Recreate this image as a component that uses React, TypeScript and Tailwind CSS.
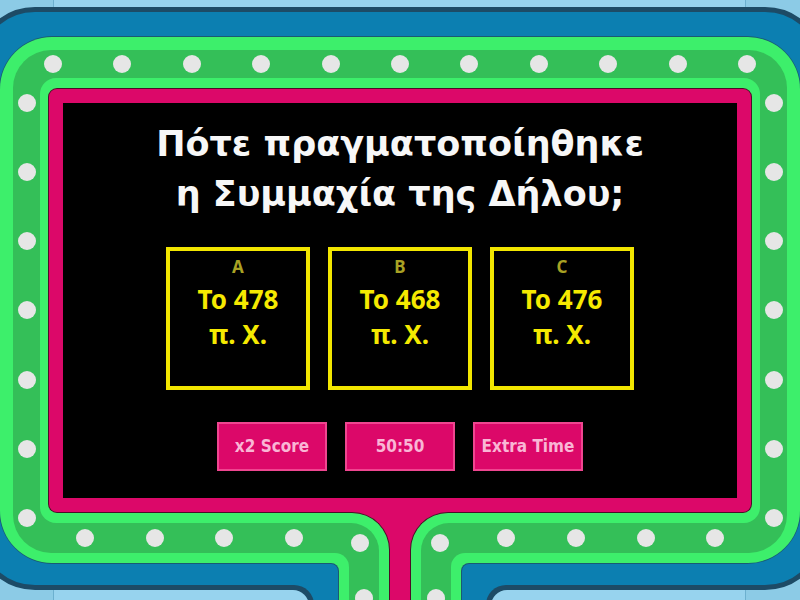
const BLUE = "bg-[#0c7fb1]";

function Dot({ className = "" }: { className?: string }) {
  return <div className={`h-[18px] w-[18px] shrink-0 rounded-full bg-[#e6e6e6] ${className}`} />;
}

function Dots({ n }: { n: number }) {
  return (
    <>
      {Array.from({ length: n }).map((_, i) => (
        <Dot key={i} />
      ))}
    </>
  );
}

const answers = [
  { letter: "A", text: "To 478" },
  { letter: "B", text: "To 468" },
  { letter: "C", text: "To 476" },
];

const powerUps = ["x2 Score", "50:50", "Extra Time"];

function Screen() {
  return (
    <div className="h-full rounded-[16px] bg-[#3def6b] px-[8px] py-[10px]">
      <div className="h-full rounded-[9px] bg-[#4a0e26] p-px">
        <div className="flex h-full flex-col items-center rounded-[8px] border-[14px] border-[#dc0869] bg-black pt-[16px]">
          <h1 className="whitespace-nowrap text-center font-['DejaVu_Sans',sans-serif] text-[35px] font-bold leading-[50px] text-[#f7f7f7]">
            Πότε πραγματοποίηθηκε
            <br />
            η Συμμαχία της Δήλου;
          </h1>

          <div className="mt-[28px] flex gap-[18px]">
            {answers.map((a) => (
              <div
                key={a.letter}
                className="flex h-[143px] w-[144px] flex-col items-center border-[4px] border-[#f2e600] pt-[6px] font-['Noto_Sans',sans-serif] font-bold"
              >
                <span className="text-[17px] leading-[20px] text-[#a9a224]">{a.letter}</span>
                <span className="mt-[5px] text-center text-[26px] leading-[35px] text-[#f5e900]">
                  {a.text}
                  <br />
                  π. Χ.
                </span>
              </div>
            ))}
          </div>

          <div className="mt-[32px] flex gap-[18px]">
            {powerUps.map((p) => (
              <div
                key={p}
                className="flex h-[49px] w-[110px] items-center justify-center whitespace-nowrap border-2 border-[#ef4690] bg-[#dc0869] font-['DejaVu_Sans_Condensed','DejaVu_Sans',sans-serif] text-[17px] font-bold text-[#f9b6d5] [font-stretch:condensed]"
              >
                {p}
              </div>
            ))}
          </div>
        </div>
      </div>
    </div>
  );
}

export default function App() {
  return (
    <div className="relative h-[600px] w-[800px] overflow-hidden bg-[#8ccbe6]">
      {/* backdrop panel behind the board */}
      <div className="absolute inset-y-0 left-[53px] w-[693px] border-x border-[#6cb0cf] bg-[#97d3ee]" />

      {/* main board frame */}
      <div
        className={`relative mx-[-25px] mt-[7px] h-[583px] rounded-[60px] border-[5px] border-[#1d4b66] ${BLUE} px-[19px] pb-[21px] pt-[24px]`}
      >
        <div className="h-full rounded-[54px] bg-[#1a5a72] p-px">
          <div className="h-full rounded-[52px] bg-[#3def6b] px-[13px] pb-[10px] pt-[13px]">
            <div className="grid h-full grid-cols-[27px_1fr_27px] grid-rows-[28px_1fr_30px] rounded-[38px] bg-[#34bf58]">
              <div className="col-start-1 row-span-3 row-start-1 flex flex-col items-center justify-between pb-[26px] pt-[44px]">
                <Dots n={7} />
              </div>
              <div className="col-start-2 row-start-1 flex items-center justify-between px-[4px]">
                <Dots n={11} />
              </div>
              <div className="col-start-3 row-span-3 row-start-1 flex flex-col items-center justify-between pb-[26px] pt-[44px]">
                <Dots n={7} />
              </div>
              <div className="col-start-2 row-start-2">
                <Screen />
              </div>
              <div className="col-start-2 row-start-3 flex items-center justify-between px-[36px]">
                <div className="flex gap-[51.5px]">
                  <Dots n={3} />
                </div>
                <div className="flex gap-[51.5px]">
                  <Dots n={3} />
                </div>
              </div>
            </div>
          </div>
        </div>
      </div>

      {/* stand under the screen */}
      <div className="absolute left-[330px] top-[505px] h-[100px] w-[140px] bg-[#dc0869]" />

      <div className="absolute left-[260px] top-[512px] h-[100px] w-[130px] rounded-tr-[38px] border-r border-t border-[#4a0e26] bg-[#3def6b] pr-[10px] pt-[10px]">
        <div className="relative h-full rounded-tr-[28px] bg-[#34bf58] pr-[30px] pt-[30px]">
          <Dot className="absolute left-[25px] top-[6px]" />
          <Dot className="absolute left-[91px] top-[11px]" />
          <Dot className="absolute left-[95px] top-[66px]" />
          <div className="h-full rounded-tr-[14px] bg-[#3def6b] pr-[10px] pt-[10px]">
            <div className="h-full rounded-tr-[8px] bg-[#1a5a72] pr-px pt-px">
              <div className={`h-full rounded-tr-[7px] ${BLUE} pr-[24px] pt-[21px]`}>
                <div className="h-full rounded-tr-[20px] bg-[#1d4b66] pr-[5px] pt-[5px]">
                  <div className="h-full rounded-tr-[16px] bg-[#97d3ee]" />
                </div>
              </div>
            </div>
          </div>
        </div>
      </div>

      <div className="absolute left-[410px] top-[512px] h-[100px] w-[130px] rounded-tl-[38px] border-l border-t border-[#4a0e26] bg-[#3def6b] pl-[10px] pt-[10px]">
        <div className="relative h-full rounded-tl-[28px] bg-[#34bf58] pl-[30px] pt-[30px]">
          <Dot className="absolute left-[76px] top-[6px]" />
          <Dot className="absolute left-[10px] top-[11px]" />
          <Dot className="absolute left-[6px] top-[66px]" />
          <div className="h-full rounded-tl-[14px] bg-[#3def6b] pl-[10px] pt-[10px]">
            <div className="h-full rounded-tl-[8px] bg-[#1a5a72] pl-px pt-px">
              <div className={`h-full rounded-tl-[7px] ${BLUE} pl-[24px] pt-[21px]`}>
                <div className="h-full rounded-tl-[20px] bg-[#1d4b66] pl-[5px] pt-[5px]">
                  <div className="h-full rounded-tl-[16px] bg-[#97d3ee]" />
                </div>
              </div>
            </div>
          </div>
        </div>
      </div>
    </div>
  );
}
